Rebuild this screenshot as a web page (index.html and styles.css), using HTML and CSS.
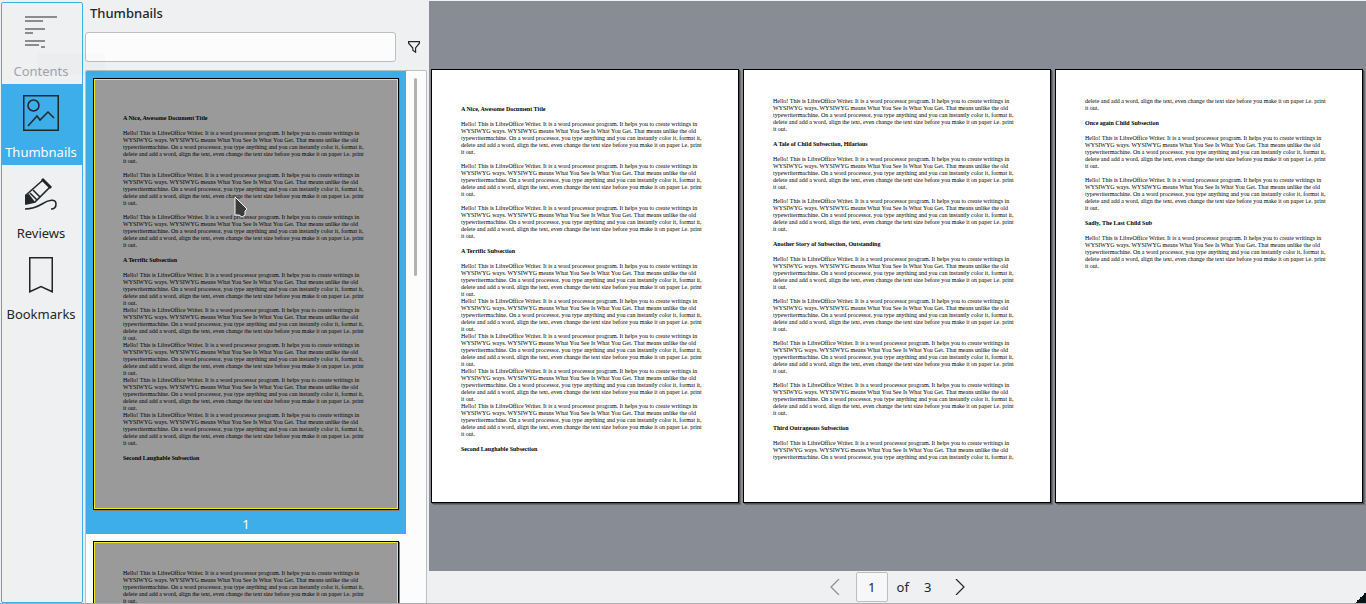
FILE: index.html
```html
<!DOCTYPE html>
<html lang="en">
<head>
  <meta charset="UTF-8">
  <meta name="viewport" content="width=device-width, initial-scale=1.0">
  <title>Document Viewer</title>
  <link rel="stylesheet" href="styles.css">
</head>
<body>

  <div class="window">

    <nav class="tabs">
      <button type="button" class="tab" disabled>
        <svg width="32" height="32" viewBox="0 0 32 32" fill="#8a8c8e">
          <path d="M0 0h32v2H0zM0 4h18v2H0zM0 12h20v2H0zM0 16h8v2H0zM0 24h20v2H0zM0 28h14v2H0zM16 30h4v2h-4z"/>
        </svg>
        <span>Contents</span>
      </button>
      <button type="button" class="tab active">
        <svg width="36" height="36" viewBox="0 0 36 36" fill="none" stroke="#232629" stroke-width="1.5">
          <path d="M.75.75h34.5v34.5H.75zM5 31l9-10 3 4 8-8 6 6"/>
          <circle cx="10.500" cy="10.500" r="5.500"/>
        </svg>
        <span>Thumbnails</span>
      </button>
      <button type="button" class="tab">
        <svg width="34" height="34" viewBox="0 0 34 34" fill="none" stroke="#232629" stroke-width="1.6">
          <path d="M19 3l7 7-15 15-9 2v-9z"/>
          <path d="M6 16l7 7M9 13l7 7"/>
          <path d="M18 2l9 9" stroke-width="3"/>
          <path d="M1 18l4-1 6 8-10 2z" fill="#232629" stroke="none"/>
          <path d="M1 32c7 0 12-2 17-5 6-4 14-6 14 0 0 3-2 5-5 5"/>
        </svg>
        <span>Reviews</span>
      </button>
      <button type="button" class="tab">
        <svg width="24" height="36" viewBox="0 0 24 36" fill="none" stroke="#232629" stroke-width="1.5">
          <path d="M.75.75h22.500v34L12 29.500.75 34.750z"/>
        </svg>
        <span>Bookmarks</span>
      </button>
      <div class="tip-shadow"></div>
    </nav>

    <aside class="panel">
      <h1>Thumbnails</h1>
      <div class="search">
        <input type="text" aria-label="Search">
        <button type="button" class="filter" aria-label="Filter">
          <svg width="12" height="12" viewBox="0 0 12 12" fill="none" stroke="#232629" stroke-width="1.2">
            <path d="M.6.6h10.800v1.600L7.600 7v4.200L4.800 9.200V7L.6 2.200z"/>
          </svg>
        </button>
      </div>
      <div class="thumbs">
        <div class="thumb-list">
          <div class="thumb selected">
            <article class="paper" data-page="0"></article>
            <div class="thumb-number">1</div>
            <svg class="cursor" width="14" height="22" viewBox="0 0 14 22" fill="#3b3b3b" stroke="#f4f4f4" stroke-width="1">
              <path d="M1 1v18h4l3 2 3-2v-4l2-2z"/>
            </svg>
          </div>
          <div class="thumb">
            <article class="paper" data-page="1"></article>
            <div class="thumb-number">2</div>
          </div>
        </div>
        <div class="scrollbar"><div class="handle"></div></div>
      </div>
    </aside>

    <main class="viewer">
      <div class="pages">
        <article class="paper" data-page="0"></article>
        <article class="paper" data-page="1"></article>
        <article class="paper" data-page="2"></article>
      </div>
      <footer class="pager">
        <button type="button" aria-label="Previous page" disabled>
          <svg width="10" height="16" viewBox="0 0 10 16" fill="none" stroke="currentColor" stroke-width="1.2"><path d="M9 0L1 8l8 8"/></svg>
        </button>
        <input type="text" value="1" aria-label="Page">
        <span class="of">of</span>
        <span class="count">3</span>
        <button type="button" aria-label="Next page">
          <svg width="10" height="16" viewBox="0 0 10 16" fill="none" stroke="currentColor" stroke-width="1.2"><path d="M1 0l8 8-8 8"/></svg>
        </button>
      </footer>
    </main>

    <div class="corner"></div>
  </div>

  <script>
    const lines = [
      'Hello! This is LibreOffice Writer. It is a word processor program. It helps you to create writings in',
      'WYSIWYG ways. WYSIWYG means What You See Is What You Get. That means unlike the old',
      'typewritermachine. On a word processor, you type anything and you can instantly color it, format it,',
      'delete and add a word, align the text, even change the text size before you make it on paper i.e. print',
      'it out.'
    ];

    const heading = text => `<h2>${text}</h2>`;
    const para = (from = 0, to = 5) => `<p>${lines.slice(from, to).join('<br>')}</p>`;
    const tight = n => `<div class="tight">${para().repeat(n)}</div>`;

    const pages = [
      '<div class="blank"></div>' +
        heading('A Nice, Awesome Document Title') + para().repeat(3) +
        heading('A Terrific Subsection') + tight(5) +
        heading('Second Laughable Subsection'),
      para() +
        heading('A Tale of Child Subsection, Hilarious') + para().repeat(2) +
        heading('Another Story of Subsection, Outstanding') + para().repeat(4) +
        heading('Third Outrageous Subsection') + para(0, 3),
      para(3, 5) +
        heading('Once again Child Subsection') + para().repeat(2) +
        heading('Sadly, The Last Child Sub') + para()
    ];

    document.querySelectorAll('.paper').forEach(el => {
      el.innerHTML = pages[el.dataset.page];
    });
  </script>

</body>
</html>
```
FILE: styles.css
```css
* {
  box-sizing: border-box;
}

body {
  margin: 0;
  font-family: "Noto Sans", sans-serif;
  font-size: 13px;
  color: #232629;
  background: #eff0f1;
}

button, input {
  font: inherit;
  color: inherit;
}

button {
  padding: 0;
  border: none;
  background: none;
}

svg {
  display: block;
}

.window {
  position: relative;
  display: flex;
  height: 100vh;
  padding-top: 1px;
  border-bottom: 1px solid #a9abad;
  overflow: hidden;
}

/* --- Sidebar tabs --- */
.tabs {
  position: relative;
  flex: none;
  width: 82px;
  margin: 1px 2px 0 1px;
  border: 1px solid #3daee9;
  border-radius: 2px;
}

.tab {
  display: flex;
  flex-direction: column;
  align-items: center;
  justify-content: space-between;
  width: 100%;
  height: 81px;
  padding: 11px 2px 3px 0;
  line-height: 20px;
}

.tab svg {
  height: 36px;
}

.tab:disabled {
  color: #a3a5a6;
}

.tab.active {
  background: #3daee9;
}

.tab.active span {
  color: #fcfcfc;
}

/* leftover of the fading tooltip */
.tip-shadow {
  position: absolute;
  top: 50px;
  left: 36px;
  z-index: 2;
  width: 67px;
  height: 22px;
  background: rgba(0, 0, 0, 0.01);
}

/* --- Thumbnails panel --- */
.panel {
  display: flex;
  flex-direction: column;
  flex: none;
  width: 344px;
}

.panel h1 {
  margin: 0;
  padding: 2px 5px 9px;
  font-size: 13px;
  font-weight: 500;
  line-height: 20px;
}

.search {
  display: flex;
  align-items: center;
  gap: 12px;
  padding-right: 9px;
  margin-bottom: 8px;
}

.search input {
  flex: 1;
  min-width: 0;
  height: 30px;
  border: 1px solid #bcbebf;
  border-radius: 3px;
  background: #fcfcfc;
}

.thumbs {
  display: flex;
  flex: 1;
  min-height: 0;
  width: 342px;
  border: 1px solid #bcbebf;
  border-bottom: none;
  border-radius: 2px 2px 0 0;
  background: #fcfcfc;
  overflow: hidden;
}

.thumb-list {
  flex: 1;
}

.thumb {
  position: relative;
  padding: 7px 7px 0;
}

.thumb.selected {
  background: #3daee9;
}

.thumb-number {
  line-height: 20px;
  padding: 4px 0 0;
  text-align: center;
}

.selected .thumb-number {
  color: #fcfcfc;
}

.cursor {
  position: absolute;
  top: 125px;
  left: 148px;
}

.scrollbar {
  width: 20px;
  padding: 7px 8px;
}

.handle {
  height: 198px;
  width: 3px;
  border-radius: 2px;
  background: #b0b2b3;
}

/* --- Document pages --- */
.viewer {
  display: flex;
  flex-direction: column;
  flex: 1;
  min-width: 0;
}

.pages {
  display: flex;
  align-items: center;
  gap: 4px;
  flex: 1;
  min-height: 0;
  padding: 0 3px 0 2px;
  background: #888c94;
}

.pages .paper {
  flex: 1;
  min-width: 0;
}

.paper {
  aspect-ratio: 308 / 434;
  padding: 28px 0 0 29px;
  border: 1px solid #000;
  background: #fff;
  box-shadow: 1px 1px 0 #4c4e52, 2px 2px 0 #6a6d73;
  color: #000;
  font-family: "Liberation Serif", serif;
  font-size: 6px;
  line-height: 7px;
  white-space: nowrap;
  overflow: hidden;
}

.thumb .paper {
  aspect-ratio: 306 / 432;
  background: #9a9a9a;
  outline: 1px solid #f0ea20;
  outline-offset: -2px;
  box-shadow: 1px 1px 0 #808080;
}

.paper h2 {
  margin: 0 0 8px;
  font-size: 6px;
  line-height: 8px;
}

.paper p {
  margin: 0 0 7px;
}

.paper .blank {
  height: 7px;
}

.paper .tight {
  margin-bottom: 7px;
}

.paper .tight p {
  margin: 0;
}

/* --- Page navigation --- */
.pager {
  display: flex;
  align-items: center;
  justify-content: center;
  flex: none;
  height: 32px;
}

.pager button:disabled {
  color: #8a8c8e;
}

.pager input {
  width: 32px;
  height: 30px;
  margin: 0 9px 0 16px;
  padding: 0;
  border: 1px solid #bcbebf;
  border-radius: 2px;
  background: #f7f7f7;
  text-align: center;
}

.pager .of {
  margin-right: 15px;
}

.pager .count {
  margin-right: 24px;
}

.corner {
  position: absolute;
  right: 0;
  bottom: -1px;
  width: 12px;
  height: 12px;
  background: linear-gradient(135deg, transparent 50%, #06141a 50%);
}
```
